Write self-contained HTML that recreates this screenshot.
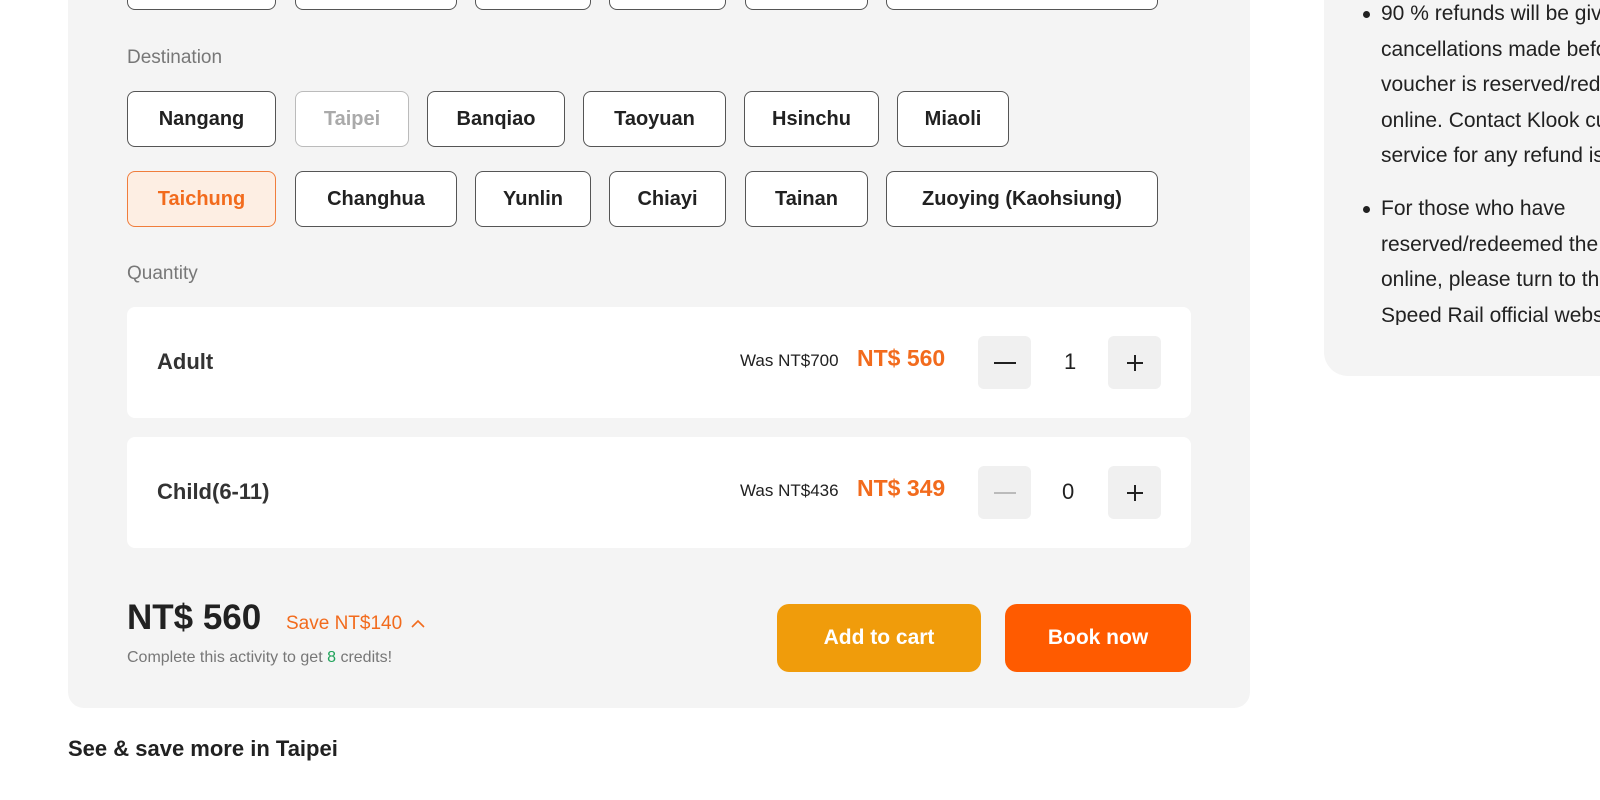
<!DOCTYPE html>
<html><head><meta charset="utf-8"><style>
*{margin:0;padding:0;box-sizing:border-box}
body{width:1600px;height:800px;overflow:hidden;background:#fff;font-family:"Liberation Sans",sans-serif;color:#212121;position:relative}
.a{position:absolute}
.panel{left:68px;top:-40px;width:1182px;height:748px;background:#f4f4f4;border-radius:16px}
.rp{left:1324px;top:-40px;width:320px;height:416px;background:#f4f4f4;border-radius:24px;overflow:hidden}
.b{position:absolute;height:56px;border:1.5px solid #555;border-radius:8px;background:#fff;font-size:20px;font-weight:bold;display:flex;align-items:center;justify-content:center;color:#212121}
.lbl{font-size:19px;color:#777}
.card{left:127px;width:1064px;height:111px;background:#fff;border-radius:8px}
.q{position:absolute;width:53px;height:53px;background:#f0f0f0;border-radius:6px;top:29px;display:flex;align-items:center;justify-content:center}
.li{position:absolute;left:57px;font-size:21px;line-height:35.5px;color:#212121;white-space:nowrap}
.li:before{content:"";position:absolute;left:-18px;top:15px;width:7px;height:7px;border-radius:50%;background:#212121}
</style></head><body>
<div class="a panel"></div>
<div class="b" style="left:127px;top:-46px;width:149px"></div>
<div class="b" style="left:295px;top:-46px;width:162px"></div>
<div class="b" style="left:475px;top:-46px;width:116px"></div>
<div class="b" style="left:609px;top:-46px;width:117px"></div>
<div class="b" style="left:745px;top:-46px;width:123px"></div>
<div class="b" style="left:886px;top:-46px;width:272px"></div>

<div class="a lbl" style="left:127px;top:47px">Destination</div>
<div class="b" style="left:127px;top:91px;width:149px">Nangang</div>
<div class="b" style="left:295px;top:91px;width:114px;border-color:#bbb;color:#aaa">Taipei</div>
<div class="b" style="left:427px;top:91px;width:138px">Banqiao</div>
<div class="b" style="left:583px;top:91px;width:143px">Taoyuan</div>
<div class="b" style="left:744px;top:91px;width:135px">Hsinchu</div>
<div class="b" style="left:897px;top:91px;width:112px">Miaoli</div>

<div class="b" style="left:127px;top:171px;width:149px;background:#fdeee3;border-color:#f07d3c;color:#f26b1d">Taichung</div>
<div class="b" style="left:295px;top:171px;width:162px">Changhua</div>
<div class="b" style="left:475px;top:171px;width:116px">Yunlin</div>
<div class="b" style="left:609px;top:171px;width:117px">Chiayi</div>
<div class="b" style="left:745px;top:171px;width:123px">Tainan</div>
<div class="b" style="left:886px;top:171px;width:272px">Zuoying (Kaohsiung)</div>

<div class="a lbl" style="left:127px;top:263px">Quantity</div>

<div class="a card" style="top:307px">
 <div class="a" style="left:30px;top:42px;font-size:22px;font-weight:bold;color:#333">Adult</div>
 <div class="a" style="left:613px;top:44px;font-size:17px">Was NT$700</div>
 <div class="a" style="left:730px;top:38px;font-size:23px;font-weight:bold;color:#f26b1d">NT$ 560</div>
 <div class="q" style="left:851px"><svg width="22" height="4"><rect width="22" height="2" y="1" fill="#212121"/></svg></div>
 <div class="a" style="left:937px;top:42px;font-size:22px">1</div>
 <div class="q" style="left:981px"><svg width="20" height="20"><path d="M10 2v16M2 10h16" stroke="#212121" stroke-width="2"/></svg></div>
</div>
<div class="a card" style="top:437px">
 <div class="a" style="left:30px;top:42px;font-size:22px;font-weight:bold;color:#333">Child(6-11)</div>
 <div class="a" style="left:613px;top:44px;font-size:17px">Was NT$436</div>
 <div class="a" style="left:730px;top:38px;font-size:23px;font-weight:bold;color:#f26b1d">NT$ 349</div>
 <div class="q" style="left:851px"><svg width="22" height="4"><rect width="22" height="2" y="1" fill="#bbb"/></svg></div>
 <div class="a" style="left:935px;top:42px;font-size:22px">0</div>
 <div class="q" style="left:981px"><svg width="20" height="20"><path d="M10 2v16M2 10h16" stroke="#212121" stroke-width="2"/></svg></div>
</div>

<div class="a" style="left:127px;top:598px;font-size:35px;font-weight:bold">NT$ 560</div>
<div class="a" style="left:286px;top:613px;font-size:19px;color:#f26b1d">Save NT$140 <svg width="14" height="10" style="margin-left:4px"><path d="M1 8l6-6 6 6" fill="none" stroke="#f26b1d" stroke-width="1.6"/></svg></div>
<div class="a" style="left:127px;top:649px;font-size:16px;color:#777">Complete this activity to get <span style="color:#1fa35a">8</span> credits!</div>

<div class="a" style="left:777px;top:604px;width:204px;height:68px;background:#f09c0b;border-radius:12px;color:#fff;font-size:21px;font-weight:bold;display:flex;align-items:center;justify-content:center">Add to cart</div>
<div class="a" style="left:1005px;top:604px;width:186px;height:68px;background:#ff5b00;border-radius:12px;color:#fff;font-size:21px;font-weight:bold;display:flex;align-items:center;justify-content:center">Book now</div>

<div class="a" style="left:68px;top:736px;font-size:22px;font-weight:bold">See &amp; save more in Taipei</div>

<div class="a rp">
 <div class="li" style="top:36px">90 % refunds will be given for<br>cancellations made before the<br>voucher is reserved/redeemed<br>online. Contact Klook customer<br>service for any refund issues.</div>
 <div class="li" style="top:231px">For those who have<br>reserved/redeemed the voucher<br>online, please turn to the High<br>Speed Rail official website.</div>
</div>
<div class="a" style="left:1324px;top:325px;width:276px;height:20px;background:#f4f4f4"></div>
</body></html>
